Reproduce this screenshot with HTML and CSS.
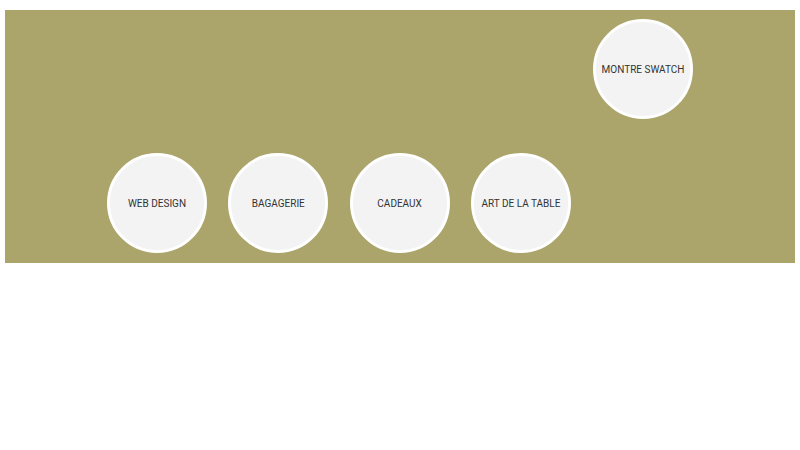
FILE: index.html
```html
<!DOCTYPE html>
<html>
<head>
<meta charset="utf-8">
<link rel="stylesheet" href="styles.css">
</head>
<body>
<div class="banner">
  <div class="row row-top">
    <div class="bubble">MONTRE SWATCH</div>
  </div>
  <div class="row row-bottom">
    <div class="bubble">WEB DESIGN</div>
    <div class="bubble">BAGAGERIE</div>
    <div class="bubble">CADEAUX</div>
    <div class="bubble">ART DE LA TABLE</div>
  </div>
</div>
</body>
</html>
```

FILE: styles.css
```css
html, body {
  margin: 0;
  padding: 0;
  background: #ffffff;
}
.banner {
  margin: 10px 5px 0 5px;
  height: 253px;
  background: #aba56b;
  box-sizing: border-box;
  padding-top: 9px;
  display: flex;
  flex-direction: column;
}
.row {
  display: flex;
}
.row-top {
  padding-left: 588px;
}
.row-bottom {
  margin-top: 34px;
  padding-left: 102px;
  gap: 21.3px;
}
.bubble {
  width: 100px;
  height: 100px;
  box-sizing: border-box;
  border: 3px solid #ffffff;
  border-radius: 50%;
  background: #f3f3f4;
  display: flex;
  align-items: center;
  justify-content: center;
  font-family: Roboto, "Liberation Sans", sans-serif;
  font-size: 10px;
  color: #333333;
  white-space: nowrap;
}
```
